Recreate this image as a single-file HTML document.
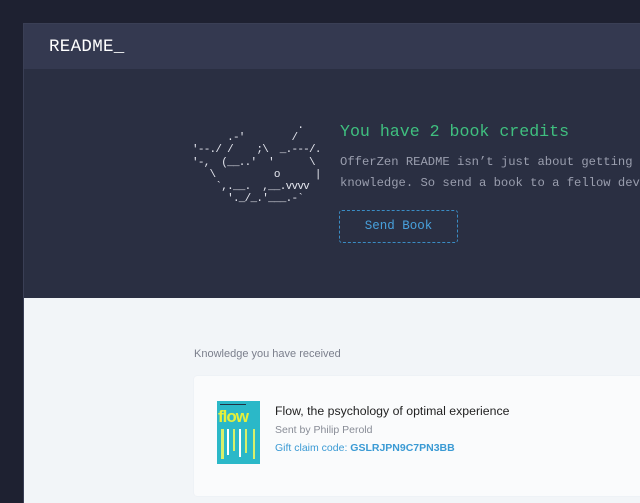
<!DOCTYPE html>
<html><head><meta charset="utf-8"><style>
*{margin:0;padding:0;box-sizing:border-box}
body{width:640px;height:480px;overflow:hidden;background:#1e2131;position:relative;font-family:"Liberation Sans",sans-serif}
.win{position:absolute;left:23px;top:23px;width:640px;height:480px;background:#f2f5f8;border-left:1px solid #3a3f55;border-top:1px solid #3a3f55}
.hdr{position:absolute;left:0;top:0;right:0;height:45px;background:#343950}
.logo{position:absolute;left:25px;top:13px;color:#fff;font-family:"Liberation Mono",monospace;font-size:17.5px;letter-spacing:0.3px}
.hero{position:absolute;left:0;top:45px;right:0;height:229px;background:#2a2f42}
pre{position:absolute;left:168px;top:51px;color:#e4e6ee;font-family:"Liberation Mono",monospace;font-size:11px;line-height:12.2px;letter-spacing:-0.75px}
.t{position:absolute;left:316px;top:53px;color:#3fbf7f;font-family:"Liberation Mono",monospace;font-size:16.6px;white-space:nowrap}
.p{position:absolute;left:316px;top:83px;color:#9a9eae;font-family:"Liberation Mono",monospace;font-size:12.2px;line-height:21px;white-space:nowrap}
.btn{position:absolute;left:315px;top:141px;width:119px;height:33px;border:1.5px dashed #3a8cc4;border-radius:3px;color:#48a0dc;font-family:"Liberation Mono",monospace;font-size:12.5px;text-align:center;line-height:30px}
.lbl{position:absolute;left:170px;top:324px;color:#7b7f8c;font-size:11px}
.card{position:absolute;left:170px;top:352px;width:480px;height:120px;background:#fafbfc;border-radius:3px;box-shadow:0 0 1px #dde2e8}
.book{position:absolute;left:23px;top:25px;width:43px;height:63px;background:#2bb8c8;overflow:hidden}
.bt{position:absolute;left:81px;top:28px;color:#222;font-size:12.3px}
.s{position:absolute;left:81px;top:48px;color:#888c96;font-size:10.5px}
.g{position:absolute;left:81px;top:66px;color:#3a9ad4;font-size:10.5px}
.ln{position:absolute;height:1.5px;background:#d8f06a}
</style></head><body>
<div class="win">
<div class="hdr"><div class="logo">README_</div></div>
<div class="hero">
<pre>                  .
      .-'        /
'--./ /    ;\  _.---/.
'-,  (__..'  '      \
   \          o      |
    `,.__.  ,__.vvvv
      '._/_.'___.-`</pre>
<div class="t">You have 2 book credits</div>
<div class="p">OfferZen README isn’t just about getting<br>knowledge. So send a book to a fellow dev</div>
<div class="btn">Send Book</div>
</div>
<div class="lbl">Knowledge you have received</div>
<div class="card">
<div class="book">
<div class="ln" style="left:3px;top:3px;width:26px;height:1px;background:#234"></div>
<div style="position:absolute;left:1px;top:6px;color:#e6f03a;font-weight:bold;font-size:17px;letter-spacing:-1px">flow</div>
<div class="ln" style="left:4px;top:28px;width:3px;height:30px"></div>
<div class="ln" style="left:10px;top:28px;width:2px;height:26px;background:#fff"></div>
<div class="ln" style="left:16px;top:28px;width:2px;height:22px"></div>
<div class="ln" style="left:22px;top:28px;width:2px;height:28px;background:#fff"></div>
<div class="ln" style="left:28px;top:28px;width:2px;height:24px"></div>
<div class="ln" style="left:36px;top:28px;width:2px;height:30px"></div>
</div>
<div class="bt">Flow, the psychology of optimal experience</div>
<div class="s">Sent by Philip Perold</div>
<div class="g">Gift claim code: <b>GSLRJPN9C7PN3BB</b></div>
</div>
</div>
</body></html>
